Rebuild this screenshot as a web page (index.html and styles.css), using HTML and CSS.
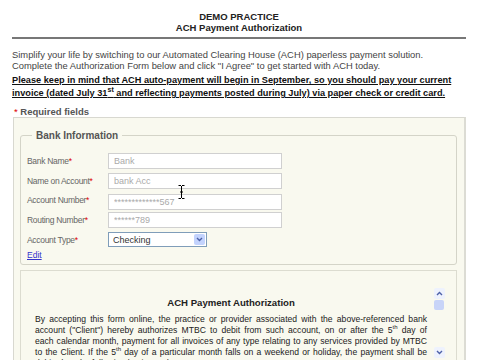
FILE: index.html
```html
<!DOCTYPE html>
<html lang="en">

<head>
  <meta charset="UTF-8" />
  <title>ACH Payment Authorization</title>
  <link rel="stylesheet" href="styles.css">
</head>

<body>
  <div class="page">
    <div class="header">
      <div>DEMO PRACTICE</div>
      <div>ACH Payment Authorization</div>
    </div>
    <hr class="rule">

    <p class="intro">Simplify your life by switching to our Automated Clearing House (ACH) paperless payment solution.<br>
      Complete the Authorization Form below and click "I Agree" to get started with ACH today.</p>

    <p class="notice">Please keep in mind that ACH auto-payment will begin in September, so you should pay your current
      invoice (dated July 31<sup>st</sup> and reflecting payments posted during July) via paper check or credit card.</p>

    <div class="req-title"><span class="star">*</span> Required fields</div>
    <div class="form-box">
      <fieldset class="bank">
        <legend>Bank Information</legend>
        <div class="row">
          <label>Bank Name<span class="star">*</span></label>
          <input type="text" value="Bank">
        </div>
        <div class="row">
          <label>Name on Account<span class="star">*</span></label>
          <input type="text" value="bank Acc">
        </div>
        <div class="row">
          <label>Account Number<span class="star">*</span></label>
          <div class="field-wrap">
            <input type="text" value="*************567">
            <!-- mouse cursor in the shot -->
            <svg class="ibeam" width="7" height="14" viewBox="0 0 7 14">
              <path d="M0.5 0.5h2.5M4 0.5h2.5M3.5 1v12M0.5 13.5h2.5M4 13.5h2.5M2 7h3" stroke="#000" stroke-width="1" fill="none" />
            </svg>
          </div>
        </div>
        <div class="row">
          <label>Routing Number<span class="star">*</span></label>
          <input type="text" value="******789">
        </div>
        <div class="row">
          <label>Account Type<span class="star">*</span></label>
          <div class="select">
            <span>Checking</span>
            <span class="select-btn">
              <svg width="7" height="5" viewBox="0 0 7 5">
                <path d="M1 1l2.5 2.5L6 1" stroke="#4d61a8" stroke-width="1.4" fill="none" />
              </svg>
            </span>
          </div>
        </div>
        <a href="#" class="edit">Edit</a>
      </fieldset>

      <div class="terms">
        <div class="terms-text">
          <h4>ACH Payment Authorization</h4>
          <p>
            <span class="jl">By accepting this form online, the practice or provider associated with the above-referenced bank</span>
            <span class="jl">account ("Client") hereby authorizes MTBC to debit from such account, on or after the 5<sup>th</sup> day of</span>
            <span class="jl">each calendar month, payment for all invoices of any type relating to any services provided by MTBC</span>
            <span class="jl">to the Client. If the 5<sup>th</sup> day of a particular month falls on a weekend or holiday, the payment shall be</span>
            <span>debited on the following business day.</span>
          </p>
        </div>
        <div class="scrollbar">
          <span class="arrow">
            <svg width="7" height="5" viewBox="0 0 7 5"><path d="M1 4l2.5-2.5L6 4" stroke="#4d61a8" stroke-width="1.4" fill="none" /></svg>
          </span>
          <span class="thumb"></span>
          <span class="track"></span>
          <span class="arrow">
            <svg width="7" height="5" viewBox="0 0 7 5"><path d="M1 1l2.5 2.5L6 1" stroke="#4d61a8" stroke-width="1.4" fill="none" /></svg>
          </span>
        </div>
      </div>
    </div>
  </div>
</body>

</html>
```

FILE: styles.css
```css
body {
  margin: 0;
  padding: 0;
  background: #fff;
  font-family: "Liberation Sans", Arial, sans-serif;
  color: #333;
  overflow: hidden;
}

.page {
  width: 454px;
  margin: 0 0 0 12px;
}

.header {
  padding-top: 12px;
  text-align: center;
  font-weight: bold;
  font-size: 9.5px;
  line-height: 10.5px;
  color: #222;
}

.rule {
  margin: 4px 0 0 0;
  border: none;
  border-top: 2px solid #777;
}

.intro {
  margin: 10px 0 0 0;
  font-size: 9.4px;
  line-height: 11px;
  color: #444;
}

.notice {
  margin: 3px 0 0 0;
  font-size: 9.2px;
  line-height: 13px;
  font-weight: bold;
  color: #111;
  text-decoration: underline;
}

.notice sup {
  font-size: 7px;
  line-height: 0;
}

.req-title {
  margin-top: 7px;
  padding-left: 2px;
  font-size: 9.5px;
  font-weight: bold;
  color: #555;
  line-height: 9px;
}

.star {
  color: #d00;
  font-weight: normal;
}

.form-box {
  margin-top: 1px;
  margin-left: 1px;
  border: 1px solid #d8d8d0;
  border-right: 2px solid #dcdcd4;
  background: #f9f9ef;
  padding: 12px 7px 0 6px;
}

.bank {
  margin: 0;
  padding: 10px 6px 3px 6px;
  border: 1px solid #d4d4c8;
  border-radius: 3px;
}

.bank legend {
  padding: 0 4px;
  margin-left: 5px;
  font-size: 10px;
  font-weight: bold;
  color: #555;
}

.row {
  display: flex;
  align-items: center;
  height: 19.7px;
}

.row label {
  width: 81px;
  font-size: 8.5px;
  color: #666;
  letter-spacing: -0.3px;
}

.row input,
.field-wrap input {
  width: 174px;
  height: 16px;
  box-sizing: border-box;
  border: 1px solid #d0d0d0;
  background: #fff;
  padding: 0 5px;
  font-family: "Liberation Sans", Arial, sans-serif;
  font-size: 9px;
  color: #aaa;
}

.field-wrap {
  position: relative;
}

.ibeam {
  position: absolute;
  left: 70px;
  top: -6px;
}

.select {
  width: 99px;
  height: 15px;
  box-sizing: border-box;
  border: 1px solid #7f9db9;
  background: #fff;
  display: flex;
  align-items: center;
  justify-content: space-between;
  padding-left: 4px;
  font-size: 9px;
  color: #333;
}

.select-btn {
  width: 11px;
  height: 11px;
  margin-right: 1px;
  background: #c3d3fd;
  border-radius: 2px;
  display: flex;
  align-items: center;
  justify-content: center;
}

.edit {
  display: block;
  margin-top: 1px;
  font-size: 8.5px;
  color: #33c;
  line-height: 11px;
}

.terms {
  margin-top: 5px;
  border: 1px solid #dcdcd0;
  height: 120px;
  padding: 17px 11px 0 14px;
  display: flex;
  gap: 6px;
}

.terms-text {
  flex: 1;
  padding-top: 8px;
}

.terms h4 {
  margin: 0;
  text-align: center;
  font-size: 9.6px;
  color: #222;
  line-height: 14px;
}

.terms p {
  margin: 4px 0 0 0;
  font-size: 8.6px;
  line-height: 11px;
  color: #222;
}

.terms p span {
  display: block;
  white-space: nowrap;
}

.terms p .jl {
  text-align: justify;
  text-align-last: justify;
}

.terms sup {
  font-size: 6px;
  line-height: 0;
}

.scrollbar {
  width: 12px;
  display: flex;
  flex-direction: column;
  align-items: center;
  height: 70px;
}

.arrow {
  width: 11px;
  height: 11px;
  display: flex;
  align-items: center;
  justify-content: center;
  background: #eef2fd;
  border-radius: 2px;
}

.thumb {
  width: 10px;
  height: 10px;
  margin-top: 1px;
  background: #c8d4f8;
  border-radius: 2px;
}

.track {
  flex: 1;
}
```
